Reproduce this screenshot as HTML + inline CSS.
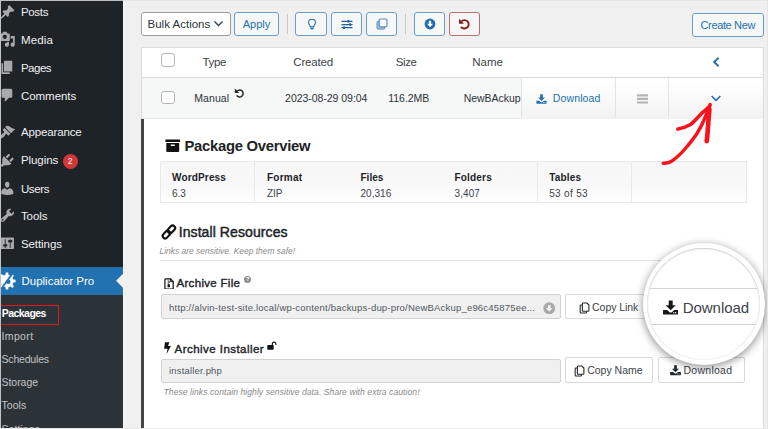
<!DOCTYPE html>
<html><head><meta charset="utf-8">
<style>
*{box-sizing:border-box;margin:0;padding:0}
html,body{width:768px;height:429px;overflow:hidden;background:#f0f0f1;font-family:"Liberation Sans",sans-serif;}
.abs{position:absolute}
#root{position:relative;width:768px;height:429px;overflow:hidden;background:#f0f0f1}
.ic{position:absolute;left:-1.400px;fill:#a7aaad}
.btn{position:absolute;height:24px;border:1px solid #6a9dca;border-radius:3px;background:#f6f7f7}
.t{position:absolute;white-space:pre;line-height:14px}
.wbtn{position:absolute;height:24px;border:1px solid #d8d8d8;border-radius:2px;background:#fff}
.inp{position:absolute;height:24px;background:#f0f0f0;border:1px solid #d2d2d2;border-radius:2px}
.cb{position:absolute;width:13.600px;height:13.600px;border:1px solid #b4b7ba;border-radius:3px;background:#fff}
.vl{position:absolute;width:1px}
</style></head><body>
<div id="root">
<!-- SIDEBAR -->
<div class="abs" style="left:0;top:0;width:122.500px;height:429px;background:#1d2327"></div>
<div class="abs" style="left:0;top:295px;width:122.500px;height:134px;background:#2c3338"></div>
<div class="abs" style="left:0;top:266.800px;width:122.500px;height:28.400px;background:#2271b1"></div>
<svg class="abs" style="left:116px;top:274px" width="8" height="14" viewBox="0 0 8 14"><path d="M7.500 -0.700L0.100 6.800L7.500 14.300z" fill="#f0f0f1"/></svg>
  <svg class="ic" style="top:4px" width="16.600" height="16.600" viewBox="0 0 20 20"><path fill-rule="evenodd" d="M10.44 3.02l1.82-1.82 6.36 6.35-1.83 1.82c-1.05-.68-2.48-.57-3.41.36l-.75.75c-.92.93-1.04 2.35-.35 3.410l-1.830 1.820-2.410-2.410-2.800 2.790c-.42.420-3.380 2.710-3.800 2.290s1.860-3.390 2.280-3.810l2.790-2.790L4.100 9.360l1.830-1.820c1.050.69 2.480.57 3.400-.36l.75-.75c.93-.92 1.050-2.350.36-3.410z"/></svg>
  <svg class="ic" style="top:31px" width="16.600" height="16.600" viewBox="0 0 20 20"><path fill-rule="evenodd" d="M13 11V4c0-.55-.45-1-1-1h-1.670L9 1H5L3.670 3H2c-.55 0-1 .45-1 1v7c0 .55.45 1 1 1h10c.55 0 1-.45 1-1zM7 4.500c1.380 0 2.500 1.120 2.500 2.500S8.380 9.500 7 9.500 4.500 8.380 4.500 7 5.620 4.500 7 4.500zM14 6h5v10.500c0 1.380-1.120 2.500-2.500 2.500S14 17.880 14 16.500s1.120-2.500 2.500-2.500c.17 0 .34.020.5.050V9h-3V6zm-4 8.050V13h2v3.500c0 1.380-1.120 2.500-2.500 2.500S7 17.880 7 16.500 8.120 14 9.500 14c.17 0 .34.020.5.050z"/></svg>
  <svg class="ic" style="top:59px" width="16.600" height="16.600" viewBox="0 0 20 20"><path fill-rule="evenodd" d="M6 15V2h10v13H6zm-1 1h8v2H3V5h2v11z"/></svg>
  <svg class="ic" style="top:87px" width="16.600" height="16.600" viewBox="0 0 20 20"><path fill-rule="evenodd" d="M5 2h9c1.100 0 2 .9 2 2v7c0 1.100-.9 2-2 2h-2l-5 5v-5H5c-1.100 0-2-.9-2-2V4c0-1.100.9-2 2-2z"/></svg>
  <svg class="ic" style="top:124px" width="16.600" height="16.600" viewBox="0 0 20 20"><path fill-rule="evenodd" d="M14.480 11.060L7.410 3.990l1.500-1.500c.5-.56 2.300-.47 3.510.32 1.210.8 1.430 1.280 2.910 2.100 1.180.64 2.450 1.260 4.450.85zm-.71.71L6.700 4.700 4.930 6.470c-.39.39-.39 1.020 0 1.410l1.060 1.060c.39.390.39 1.030 0 1.420-.6.6-1.430 1.110-2.210 1.690-.35.26-.7.530-1.010.84C1.430 14.230.4 16.080 1.400 17.070c.99 1 2.840-.03 4.180-1.360.31-.31.580-.66.850-1.020.57-.78 1.080-1.610 1.690-2.210.39-.39 1.020-.39 1.410 0l1.060 1.060c.39.39 1.020.39 1.410 0z"/></svg>
  <svg class="ic" style="top:152px" width="16.600" height="16.600" viewBox="0 0 20 20"><path fill-rule="evenodd" d="M13.110 4.360L9.870 7.600 8 5.730l3.240-3.240c.35-.34 1.050-.2 1.560.32.520.51.660 1.210.31 1.550zm-8 1.770l.91-1.120 9.010 9.010-1.190.84c-.71.710-2.630 1.160-3.820 1.160H6.140L4.900 17.260c-.59.59-1.540.59-2.120 0-.59-.58-.59-1.530 0-2.120l1.240-1.240v-3.880c0-1.130.4-3.190 1.090-3.890zm7.260 3.970l3.240-3.240c.34-.35 1.040-.21 1.550.31.520.51.660 1.210.31 1.550l-3.240 3.250z"/></svg>
  <svg class="ic" style="top:180px" width="16.600" height="16.600" viewBox="0 0 20 20"><path fill-rule="evenodd" d="M10 9.250c-2.270 0-2.730-3.440-2.730-3.440C7 4.020 7.820 2 9.970 2c2.160 0 2.980 2.020 2.710 3.810 0 0-.41 3.440-2.680 3.440zm0 2.570L12.720 10c2.390 0 4.520 2.330 4.520 4.530v2.490s-3.650 1.130-7.240 1.130c-3.650 0-7.240-1.130-7.240-1.130v-2.490c0-2.250 1.940-4.480 4.470-4.480z"/></svg>
  <svg class="ic" style="top:207px" width="16.600" height="16.600" viewBox="0 0 20 20"><path fill-rule="evenodd" d="M16.680 9.770c-1.340 1.340-3.300 1.670-4.950.99l-5.410 6.520c-.99.990-2.590.990-3.580 0s-.99-2.590 0-3.570l6.520-5.420c-.68-1.650-.35-3.610.99-4.950 1.280-1.280 3.120-1.620 4.720-1.060l-2.890 2.890 2.820 2.820 2.860-2.870c.53 1.580.18 3.390-1.080 4.650zM3.810 16.210c.4.390 1.040.39 1.430 0 .4-.4.400-1.040 0-1.430-.39-.4-1.030-.4-1.430 0-.39.390-.39 1.030 0 1.430z"/></svg>
  <svg class="ic" style="top:235px" width="16.600" height="16.600" viewBox="0 0 20 20"><path fill-rule="evenodd" d="M18 16V4c0-.55-.45-1-1-1H3c-.55 0-1 .45-1 1v12c0 .55.45 1 1 1h14c.55 0 1-.45 1-1zM8 11h1c.55 0 1 .45 1 1v1c0 .55-.45 1-1 1H8v1.500c0 .28-.22.500-.5.500s-.5-.22-.5-.5V14H6c-.55 0-1-.45-1-1v-1c0-.55.45-1 1-1h1V5.500c0-.28.220-.5.500-.5s.5.220.5.500V11zm5-2h-1c-.55 0-1-.45-1-1V7c0-.55.450-1 1-1h1v-.5c0-.28.220-.5.500-.5s.5.220.5.500V6h1c.55 0 1 .45 1 1v1c0 .55-.45 1-1 1h-1v6.500c0 .28-.22.500-.5.500s-.5-.22-.5-.5V9z"/></svg>
<svg class="abs" style="left:-3.500px;top:270.500px" width="20" height="20" viewBox="-10 -10 20 20"><path d="M6.33 -1.48 L8.61 -1.21 L8.61 1.21 L6.33 1.48 L5.52 3.43 L6.95 5.23 L5.23 6.95 L3.43 5.52 L1.48 6.33 L1.21 8.61 L-1.21 8.61 L-1.48 6.33 L-3.43 5.52 L-5.23 6.95 L-6.95 5.23 L-5.52 3.43 L-6.33 1.48 L-8.61 1.21 L-8.61 -1.21 L-6.33 -1.48 L-5.52 -3.43 L-6.95 -5.23 L-5.23 -6.95 L-3.43 -5.52 L-1.48 -6.33 L-1.21 -8.61 L1.21 -8.61 L1.48 -6.33 L3.43 -5.52 L5.23 -6.95 L6.95 -5.23 L5.52 -3.43Z" fill="#fff"/><circle cx="1.200" cy="0.800" r="2.300" fill="#2271b1"/><path d="M-6.800 9.200 L6.800 -9.200" stroke="#2271b1" stroke-width="1.800"/></svg>
<div class="abs" style="left:62.500px;top:153.500px;width:15px;height:15px;border-radius:8px;background:#d63638;color:#fff;font-size:8.5px;line-height:15px;text-align:center">2</div>
<div class="abs" style="left:-1px;top:305px;width:60px;height:20px;border:1.5px solid #e0161d"></div>
<!-- TOOLBAR -->
<div class="abs" style="left:141px;top:11.500px;width:90px;height:24px;border:1px solid #9a9da1;border-radius:3px;background:#fff"></div>
<svg class="abs" style="left:213px;top:20px" width="11" height="8" viewBox="0 0 11 8"><path d="M1.5 1.600 L5.500 5.600 L9.500 1.600" fill="none" stroke="#3c434a" stroke-width="1.400"/></svg>
<div class="btn" style="left:234px;top:11.500px;width:45px"></div>
<div class="vl" style="left:287px;top:14px;height:20px;background:#c8c8c8"></div>
<div class="btn" style="left:295px;top:11.500px;width:32px"></div>
<div class="btn" style="left:331px;top:11.500px;width:31px"></div>
<div class="btn" style="left:366px;top:11.500px;width:31px"></div>
<div class="vl" style="left:405px;top:14px;height:20px;background:#c8c8c8"></div>
<div class="btn" style="left:414px;top:11.500px;width:31px"></div>
<div class="btn" style="left:449px;top:11.500px;width:31px;border-color:#b87070;"></div>
<div class="btn" style="left:692px;top:12.800px;width:71.500px;height:24px"></div>
<!--TBICONS-->
<!-- TABLE -->
<div class="abs" style="left:141px;top:47px;width:623px;height:381.500px;background:#fff;border:1px solid #dcdcde"></div>
<div class="abs" style="left:142px;top:77px;width:621px;height:41.700px;background:#f6f7f7;border-top:1px solid #dcdcde;border-bottom:1px solid #e9e9eb"></div>
<div class="abs" style="left:141.200px;top:118.500px;width:2.500px;height:309.500px;background:#454545"></div>
<div class="cb" style="left:161.100px;top:53.300px"></div>
<div class="cb" style="left:161.100px;top:90.600px"></div>
<div class="abs" style="left:521px;top:78px;width:242px;height:40.500px;background:linear-gradient(#ffffff,#fbfbfb 40%,#f2f2f2)"></div>
<div class="vl" style="left:521px;top:78px;height:40px;background:#e4e4e4"></div>
<div class="vl" style="left:615px;top:78px;height:40px;background:#e4e4e4"></div>
<div class="vl" style="left:668px;top:78px;height:40px;background:#e4e4e4"></div>
<!-- PACKAGE OVERVIEW -->
<div class="abs" style="left:160px;top:161px;width:587px;height:42px;background:linear-gradient(#f7f7f7,#f9f9f9 60%,#fefefe);border:1px solid #e9e9e9"></div>
<div class="vl" style="left:254px;top:161px;height:42px;background:#e9e9e9"></div>
<div class="vl" style="left:537px;top:161px;height:42px;background:#e9e9e9"></div>
<div class="vl" style="left:631px;top:161px;height:42px;background:#e9e9e9"></div>
<!-- INSTALL RESOURCES -->
<div class="abs" style="left:160px;top:260px;width:587px;height:1px;background:#e2e2e2"></div>
<div class="inp" style="left:161px;top:294px;width:400px;height:24.500px"></div>
<div class="wbtn" style="left:565px;top:293.800px;width:88px;height:25.500px"></div>
<div class="inp" style="left:161px;top:358.500px;width:400px"></div>
<div class="wbtn" style="left:565px;top:357.200px;width:88px;height:25.700px"></div>
<div class="wbtn" style="left:658px;top:357.200px;width:87px;height:25.700px"></div>
<svg class="abs" style="left:306.5px;top:17.5px" width="10" height="12" viewBox="0 0 10 12"><path d="M5 1.200c-2.100 0-3.500 1.500-3.500 3.300 0 1.200.6 1.900 1.200 2.700.4.500.6 1 .6 1.500h3.400c0-.5.200-1 .6-1.500.6-.8 1.200-1.500 1.200-2.700 0-1.800-1.400-3.300-3.500-3.300z" fill="none" stroke="#2271b1" stroke-width="1.100"/><path d="M3.400 9.600h3.200v1.100l-.6.800h-2l-.6-.8z" fill="#2271b1"/></svg>
<svg class="abs" style="left:340.5px;top:18.5px" width="12" height="11" viewBox="0 0 12 11"><path d="M0.500 2.300h11M0.500 5.500h11M0.500 8.700h11" stroke="#1f5f9e" stroke-width="1.250"/><rect x="6.500" y="1" width="1.800" height="2.600" fill="#1f5f9e"/><rect x="8.300" y="4.200" width="1.800" height="2.600" fill="#1f5f9e"/><rect x="2.200" y="7.400" width="1.800" height="2.600" fill="#1f5f9e"/></svg>
<svg class="abs" style="left:375.5px;top:17.5px" width="12" height="12" viewBox="0 0 12 12"><rect x="1" y="3.300" width="7.800" height="7.800" rx="1.200" fill="#a9bedb" stroke="#5d8fc4" stroke-width="1"/><rect x="3.200" y="1" width="7.800" height="7.800" rx="1.200" fill="#fbfcfd" stroke="#5d8fc4" stroke-width="1.200"/></svg>
<svg class="abs" style="left:423.5px;top:18px" width="12" height="12" viewBox="0 0 12 12"><circle cx="6" cy="6" r="5.400" fill="#1f6cb3"/><path d="M4.900 2.800h2.200v3h2L6 9.300 2.900 5.800h2z" fill="#fff"/></svg>
<svg class="abs" style="left:458px;top:18px" width="13" height="12" viewBox="0 0 13 12"><path d="M3.300 3.600A4.200 4.200 0 1 1 3 8.700" fill="none" stroke="#8a1c1c" stroke-width="1.900"/><path d="M1 0.800L1 5.800L6 5.800z" fill="#8a1c1c"/></svg>
<svg class="abs" style="left:233.8px;top:88px" width="11" height="10.5" viewBox="0 0 11 10.500"><path d="M3 3.200A3.500 3.500 0 1 1 2.700 7.400" fill="none" stroke="#23282d" stroke-width="1.500"/><path d="M0.800 0.600L0.800 5L5.200 5z" fill="#23282d"/></svg>
<svg class="abs" style="left:536px;top:93.8px" width="11" height="10" viewBox="0 0 16 16"><path d="M5.900 0.400h4.200v5.200h3.300L8 11 2.600 5.600h3.300z" fill="#2271b1"/><path d="M0.500 10.600h3.900l2.100 2.100c.9.900 2.100.9 3 0l2.100-2.100h3.900c.4 0 .7.300.7.700v3.500c0 .4-.3.700-.7.700h-15c-.4 0-.7-.3-.7-.7v-3.500c0-.4.300-.7.700-.7z" fill="#2271b1"/><circle cx="13.300" cy="13.600" r=".7" fill="#fff"/><circle cx="11.300" cy="13.600" r=".7" fill="#fff"/></svg>
<svg class="abs" style="left:637px;top:94px" width="11" height="10" viewBox="0 0 11 10"><path d="M0 1.300h11M0 4.900h11M0 8.500h11" stroke="#b4b4b4" stroke-width="2.200"/></svg>
<svg class="abs" style="left:710px;top:94px" width="12" height="9" viewBox="0 0 12 9"><path d="M1.600 2L6 6.300L10.400 2" fill="none" stroke="#2271b1" stroke-width="1.600"/></svg>
<svg class="abs" style="left:711px;top:56px" width="10" height="12" viewBox="0 0 10 12"><path d="M7.600 1.800L3.200 6L7.600 10.200" fill="none" stroke="#2271b1" stroke-width="1.900"/></svg>
<svg class="abs" style="left:165px;top:138.5px" width="15.5" height="13.5" viewBox="0 0 15.500 13.500"><rect x=".4" y=".4" width="14.700" height="2.600" rx=".5" fill="#111"/><path d="M1.300 3.900h12.900v8.200c0 .5-.4.900-.9.900h-11.100c-.5 0-.9-.4-.9-.9z" fill="#111"/><rect x="5.700" y="5.400" width="4.100" height="1.500" rx=".5" fill="#fff"/></svg>
<svg class="abs" style="left:160.7px;top:224px" width="16" height="16" viewBox="0 0 16 16"><g fill="none" stroke="#111" stroke-width="2.100"><rect x="-4.300" y="-2.500" width="8.600" height="5" rx="2.500" transform="translate(10.400,5.300) rotate(-47)"/><rect x="-4.300" y="-2.500" width="8.600" height="5" rx="2.500" transform="translate(5.400,10.600) rotate(-47)"/></g></svg>
<svg class="abs" style="left:164px;top:277.5px" width="10.5" height="11.8" viewBox="0 0 10.500 11.800"><path d="M1.600 .8h4.900l2.700 2.700v6.900c0 .4-.3.700-.7.700h-6.900c-.4 0-.7-.3-.7-.7v-8.900c0-.4.300-.7.700-.7z" fill="none" stroke="#111" stroke-width="1.200"/><path d="M6.300 .8v2.900h2.900" fill="none" stroke="#111" stroke-width="1"/><path d="M3.600 2.500h1.200v1.100h-1.200zM4.600 3.600h1.200v1.100h-1.200zM3.600 4.700h1.200v1.100h-1.200z" fill="#111"/><rect x="3.500" y="6.300" width="2.500" height="2.900" rx=".5" fill="#111"/></svg>
<div class="abs" style="left:244.300px;top:276.200px;width:7px;height:7px;border-radius:50%;background:#8c8f94;color:#fff;font-size:5.500px;font-weight:bold;line-height:7px;text-align:center">?</div>
<svg class="abs" style="left:543px;top:301.5px" width="12.5" height="12.5" viewBox="0 0 12.5 12.5"><circle cx="6.250" cy="6.250" r="5.900" fill="#a9a9a9"/><path d="M5 3h2.500v3h2.100L6.250 9.800 2.900 6h2.100z" fill="#f0f0f0"/></svg>
<svg class="abs" style="left:579px;top:301.5px" width="11" height="12" viewBox="0 0 15 16"><path d="M5.500 1.200h5.200l2.800 2.800v7.500c0 .5-.4.900-.9.900h-7.100c-.5 0-.9-.4-.9-.9v-9.400c0-.5.400-.9.900-.9z" fill="none" stroke="#23282d" stroke-width="1.500"/><path d="M4.600 4h-2.100c-.5 0-.9.400-.9.900v9c0 .5.400.9.900.9h6.800c.5 0 .9-.4.900-.9v-1.500" fill="none" stroke="#23282d" stroke-width="1.500"/></svg>
<svg class="abs" style="left:574.3px;top:364.5px" width="11" height="12" viewBox="0 0 15 16"><path d="M5.500 1.200h5.200l2.800 2.800v7.500c0 .5-.4.900-.9.900h-7.100c-.5 0-.9-.4-.9-.9v-9.400c0-.5.400-.9.900-.9z" fill="none" stroke="#23282d" stroke-width="1.500"/><path d="M4.600 4h-2.100c-.5 0-.9.400-.9.900v9c0 .5.400.9.900.9h6.800c.5 0 .9-.4.900-.9v-1.500" fill="none" stroke="#23282d" stroke-width="1.500"/></svg>
<svg class="abs" style="left:162.5px;top:342px" width="8" height="12.5" viewBox="0 0 8 12.500"><path d="M2 .2h4.300l-1.200 3.700h2.900l-4.600 8.400 1.200-5.500h-3.500z" fill="#111"/></svg>
<svg class="abs" style="left:266.5px;top:340.5px" width="10" height="9" viewBox="0 0 10 9"><rect x=".3" y="4" width="6.400" height="4.700" rx=".7" fill="#111"/><path d="M5.300 4.200v-1.300a1.800 1.800 0 0 1 3.600 0v1.100" fill="none" stroke="#111" stroke-width="1.100"/></svg>
<svg class="abs" style="left:670.3px;top:365px" width="11" height="10.5" viewBox="0 0 16 16"><path d="M5.900 0.400h4.200v5.200h3.300L8 11 2.600 5.600h3.300z" fill="#23282d"/><path d="M0.500 10.600h3.900l2.100 2.100c.9.900 2.100.9 3 0l2.100-2.100h3.900c.4 0 .7.300.7.700v3.500c0 .4-.3.700-.7.700h-15c-.4 0-.7-.3-.7-.7v-3.500c0-.4.300-.7.700-.7z" fill="#23282d"/><circle cx="13.300" cy="13.600" r=".7" fill="#fff"/><circle cx="11.300" cy="13.600" r=".7" fill="#fff"/></svg>
<div class="t" style="left:20.9px;top:5.2px;font-size:11.5px;letter-spacing:-0.31px;color:#f0f0f1;">Posts</div>
<div class="t" style="left:20.9px;top:32.7px;font-size:11.5px;letter-spacing:0.17px;color:#f0f0f1;">Media</div>
<div class="t" style="left:20.9px;top:60.7px;font-size:11.5px;letter-spacing:-0.48px;color:#f0f0f1;">Pages</div>
<div class="t" style="left:20.9px;top:88.7px;font-size:11.5px;letter-spacing:-0.03px;color:#f0f0f1;">Comments</div>
<div class="t" style="left:20.9px;top:125.0px;font-size:11.5px;letter-spacing:-0.13px;color:#f0f0f1;">Appearance</div>
<div class="t" style="left:20.9px;top:153.0px;font-size:11.5px;letter-spacing:-0.06px;color:#f0f0f1;">Plugins</div>
<div class="t" style="left:20.9px;top:181.7px;font-size:11.5px;letter-spacing:-0.33px;color:#f0f0f1;">Users</div>
<div class="t" style="left:20.9px;top:208.7px;font-size:11.5px;letter-spacing:-0.05px;color:#f0f0f1;">Tools</div>
<div class="t" style="left:20.9px;top:236.7px;font-size:11.5px;letter-spacing:-0.06px;color:#f0f0f1;">Settings</div>
<div class="t" style="left:21.5px;top:273.7px;font-size:11.5px;letter-spacing:-0.01px;color:#fff;">Duplicator Pro</div>
<div class="t" style="left:1.8px;top:306.4px;font-size:10.5px;letter-spacing:-0.55px;color:#fff;font-weight:bold;">Packages</div>
<div class="t" style="left:1.5px;top:329.0px;font-size:10.5px;letter-spacing:0.37px;color:#c3c4c7;">Import</div>
<div class="t" style="left:1.5px;top:352.4px;font-size:10.5px;letter-spacing:-0.18px;color:#c3c4c7;">Schedules</div>
<div class="t" style="left:1.5px;top:375.2px;font-size:10.5px;letter-spacing:-0.04px;color:#c3c4c7;">Storage</div>
<div class="t" style="left:1.5px;top:398.2px;font-size:10.5px;letter-spacing:0.06px;color:#c3c4c7;">Tools</div>
<div class="t" style="left:1.5px;top:422.2px;font-size:10.5px;letter-spacing:0.04px;color:#c3c4c7;">Settings</div>
<div class="t" style="left:147.5px;top:16.7px;font-size:11.5px;letter-spacing:0.01px;color:#2c3338;">Bulk Actions</div>
<div class="t" style="left:242.7px;top:16.7px;font-size:11px;letter-spacing:0.01px;color:#2271b1;">Apply</div>
<div class="t" style="left:700.5px;top:18.2px;font-size:11px;letter-spacing:-0.36px;color:#2271b1;">Create New</div>
<div class="t" style="left:202.5px;top:55.2px;font-size:11.5px;letter-spacing:-0.31px;color:#3c434a;">Type</div>
<div class="t" style="left:293.3px;top:55.2px;font-size:11.5px;letter-spacing:-0.16px;color:#3c434a;">Created</div>
<div class="t" style="left:395.8px;top:55.2px;font-size:11.5px;letter-spacing:-0.42px;color:#3c434a;">Size</div>
<div class="t" style="left:472.3px;top:55.2px;font-size:11.5px;letter-spacing:0.00px;color:#3c434a;">Name</div>
<div class="t" style="left:194.2px;top:90.7px;font-size:10.5px;letter-spacing:0.09px;color:#2c3338;">Manual</div>
<div class="t" style="left:285.1px;top:90.7px;font-size:10.5px;letter-spacing:-0.04px;color:#2c3338;">2023-08-29 09:04</div>
<div class="t" style="left:388.3px;top:90.7px;font-size:10.5px;letter-spacing:-0.05px;color:#2c3338;">116.2MB</div>
<div class="t" style="left:463.8px;top:90.7px;font-size:10.5px;letter-spacing:-0.06px;color:#2c3338;">NewBAckup</div>
<div class="t" style="left:552.7px;top:90.7px;font-size:10.5px;letter-spacing:0.15px;color:#2271b1;">Download</div>
<div class="t" style="left:184.5px;top:138.5px;font-size:14.8px;letter-spacing:-0.26px;color:#1d2327;font-weight:bold;">Package Overview</div>
<div class="t" style="left:172.0px;top:170.9px;font-size:10px;letter-spacing:0.16px;color:#1d2327;font-weight:bold;">WordPress</div>
<div class="t" style="left:172.0px;top:186.9px;font-size:10px;letter-spacing:-0.07px;color:#3c434a;">6.3</div>
<div class="t" style="left:267.0px;top:170.9px;font-size:10px;letter-spacing:0.23px;color:#1d2327;font-weight:bold;">Format</div>
<div class="t" style="left:267.0px;top:186.9px;font-size:10px;letter-spacing:-0.09px;color:#3c434a;">ZIP</div>
<div class="t" style="left:360.5px;top:170.9px;font-size:10px;letter-spacing:0.00px;color:#1d2327;font-weight:bold;">Files</div>
<div class="t" style="left:360.5px;top:186.9px;font-size:10px;letter-spacing:0.03px;color:#3c434a;">20,316</div>
<div class="t" style="left:454.5px;top:170.9px;font-size:10px;letter-spacing:0.18px;color:#1d2327;font-weight:bold;">Folders</div>
<div class="t" style="left:454.5px;top:186.9px;font-size:10px;letter-spacing:0.09px;color:#3c434a;">3,407</div>
<div class="t" style="left:549.2px;top:170.9px;font-size:10px;letter-spacing:0.19px;color:#1d2327;font-weight:bold;">Tables</div>
<div class="t" style="left:549.2px;top:186.9px;font-size:10px;letter-spacing:0.32px;color:#3c434a;">53 of 53</div>
<div class="t" style="left:178.7px;top:225.3px;font-size:14px;letter-spacing:0.09px;color:#1d2327;-webkit-text-stroke:0.45px #1d2327;">Install Resources</div>
<div class="t" style="left:159.5px;top:244.4px;font-size:8.4px;letter-spacing:0.03px;color:#8a8a8a;font-style:italic;">Links are sensitive. Keep them safe!</div>
<div class="t" style="left:176.5px;top:276.2px;font-size:11.5px;letter-spacing:0.31px;color:#1d2327;-webkit-text-stroke:0.4px #1d2327;">Archive File</div>
<div class="t" style="left:169.1px;top:300.7px;font-size:9.5px;letter-spacing:0.20px;color:#50575e;">http://alvin-test-site.local/wp-content/backups-dup-pro/NewBAckup_e96c45875ee...</div>
<div class="t" style="left:592.1px;top:300.2px;font-size:10.5px;letter-spacing:-0.06px;color:#3c434a;">Copy Link</div>
<div class="t" style="left:174.5px;top:341.7px;font-size:11.5px;letter-spacing:0.46px;color:#1d2327;-webkit-text-stroke:0.4px #1d2327;">Archive Installer</div>
<div class="t" style="left:169.1px;top:364.2px;font-size:9.5px;letter-spacing:0.17px;color:#50575e;">installer.php</div>
<div class="t" style="left:587.2px;top:363.2px;font-size:10.5px;letter-spacing:-0.01px;color:#3c434a;">Copy Name</div>
<div class="t" style="left:683.5px;top:363.2px;font-size:10.5px;letter-spacing:0.26px;color:#3c434a;">Download</div>
<div class="t" style="left:163.5px;top:385.4px;font-size:8.6px;letter-spacing:0.05px;color:#8a8a8a;font-style:italic;">These links contain highly sensitive data. Share with extra caution!</div>
<!-- LENS -->
<div class="abs" style="left:642.500px;top:243px;width:122px;height:122px;border-radius:50%;background:#fff;box-shadow:0 2px 8px rgba(0,0,0,.45)"></div>
<div class="abs" style="left:647.100px;top:247.600px;width:112.800px;height:112.800px;border-radius:50%;background:#fff;box-shadow:inset 0 0.500px 2px rgba(0,0,0,.3);overflow:hidden">
  <div class="abs" style="left:0;top:40.600px;width:122px;height:37px;border-top:1px solid #d4d4d4;border-bottom:1px solid #d4d4d4;"></div>
</div>
<div class="t" style="left:682.8px;top:301.3px;font-size:15px;letter-spacing:-0.06px;color:#3c434a;">Download</div>
<svg class="abs" style="left:662.8px;top:299.8px" width="15.4" height="15" viewBox="0 0 16 16"><path d="M5.900 0.400h4.200v5.200h3.300L8 11 2.600 5.600h3.300z" fill="#16191c"/><path d="M0.500 10.600h3.900l2.100 2.100c.9.900 2.100.9 3 0l2.100-2.100h3.900c.4 0 .7.300.7.700v3.500c0 .4-.3.700-.7.700h-15c-.4 0-.7-.3-.7-.7v-3.500c0-.4.300-.7.700-.7z" fill="#16191c"/><circle cx="13.300" cy="13.600" r=".7" fill="#fff"/><circle cx="11.300" cy="13.600" r=".7" fill="#fff"/></svg>
<!-- ARROW -->
<svg class="abs" style="left:640px;top:90px" width="100" height="90" viewBox="640 90 100 90"><g fill="none" stroke="#f8121c" stroke-linecap="round" stroke-linejoin="round"><path d="M663.200 163.200 C667 163.300 669.500 162.800 672.500 160.600 C677 157.500 681 153.500 684.750 149.250 C689 144.300 693 139.500 697 133.500 C700.500 128 703.500 121.500 705.750 116 C707.500 111.500 709 108 710.200 104.600" stroke-width="3.400"/><path d="M709.500 106 C707.500 108.500 705 110.500 702 113 C698.500 116.500 694.500 121.500 690 124.750 C686 127 682 128.300 677.900 129.100" stroke-width="3.600"/><path d="M709.400 109 C709.100 113 708.800 117 708.400 121.250 C708 128 707.500 135 706.700 141.200" stroke-width="4.600"/></g></svg>
<!-- edge lines -->
<div class="abs" style="left:122.500px;top:0;width:1px;height:428px;background:#f7f7f7"></div>
<div class="abs" style="left:0;top:0;width:768px;height:1px;background:#e6e6e6"></div>
<div class="abs" style="left:0;top:0;width:122.500px;height:1px;background:#bcbcbc"></div>
<div class="abs" style="left:0;top:0;width:1px;height:429px;background:#c4c4c4"></div>
<div class="abs" style="left:0;top:428px;width:768px;height:1px;background:#e9e9e9"></div>
<div class="abs" style="left:767px;top:0;width:1px;height:429px;background:#e6e6e6"></div>
</div>
</body></html>
